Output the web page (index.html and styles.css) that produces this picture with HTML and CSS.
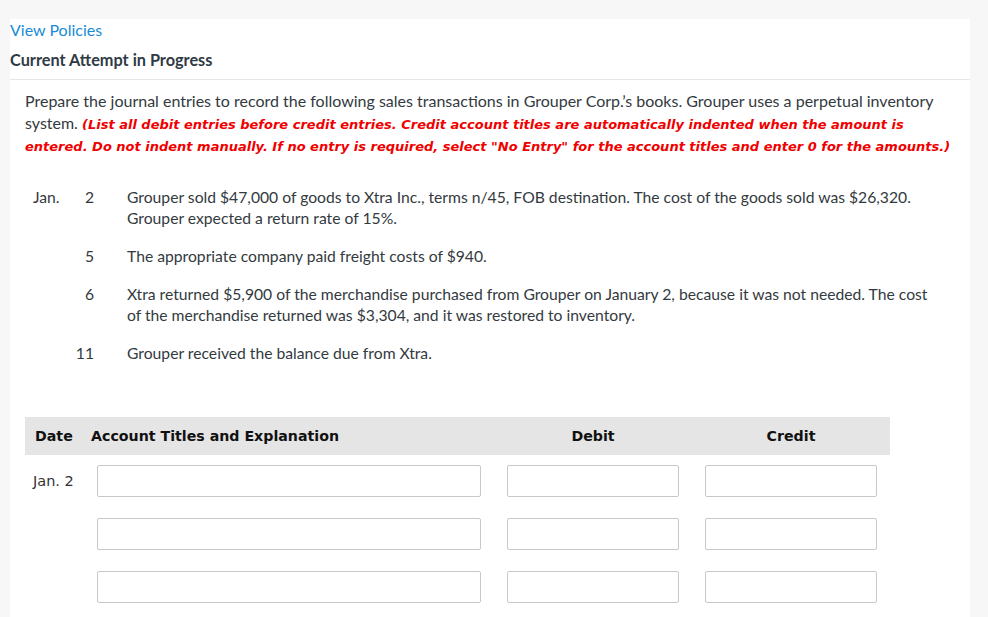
FILE: index.html
```html
<!DOCTYPE html>
<html>
<head>
<meta charset="utf-8">
<link rel="stylesheet" href="styles.css">
</head>
<body>
<div class="panel">
  <div class="top">
    <a class="link" href="#">View Policies</a>
    <div class="attempt">Current Attempt in Progress</div>
  </div>
  <div class="content">
    <p class="intro">Prepare the journal entries to record the following sales transactions in Grouper Corp.’s books. Grouper uses a perpetual inventory system. <em class="note">(List all debit entries before credit entries. Credit account titles are automatically indented when the amount is entered. Do not indent manually. If no entry is required, select "No Entry" for the account titles and enter 0 for the amounts.)</em></p>

    <div class="txns">
      <div class="txn">
        <span class="mon">Jan.</span><span class="day">2</span>
        <span class="desc">Grouper sold $47,000 of goods to Xtra Inc., terms n/45, FOB destination. The cost of the goods sold was $26,320. Grouper expected a return rate of 15%.</span>
      </div>
      <div class="txn">
        <span class="mon"></span><span class="day">5</span>
        <span class="desc">The appropriate company paid freight costs of $940.</span>
      </div>
      <div class="txn">
        <span class="mon"></span><span class="day">6</span>
        <span class="desc">Xtra returned $5,900 of the merchandise purchased from Grouper on January 2, because it was not needed. The cost of the merchandise returned was $3,304, and it was restored to inventory.</span>
      </div>
      <div class="txn">
        <span class="mon"></span><span class="day">11</span>
        <span class="desc">Grouper received the balance due from Xtra.</span>
      </div>
    </div>

    <div class="journal">
      <div class="jhead">
        <div class="h-date">Date</div>
        <div class="h-acct">Account Titles and Explanation</div>
        <div class="h-amt">Debit</div>
        <div class="h-amt">Credit</div>
      </div>
      <div class="jrows">
        <div class="jrow">
          <div class="c-date">Jan. 2</div>
          <div class="c-acct"><input class="in-acct" type="text"></div>
          <div class="c-amt"><input class="in-amt" type="text"></div>
          <div class="c-amt"><input class="in-amt" type="text"></div>
        </div>
        <div class="jrow">
          <div class="c-date"></div>
          <div class="c-acct"><input class="in-acct" type="text"></div>
          <div class="c-amt"><input class="in-amt" type="text"></div>
          <div class="c-amt"><input class="in-amt" type="text"></div>
        </div>
        <div class="jrow">
          <div class="c-date"></div>
          <div class="c-acct"><input class="in-acct" type="text"></div>
          <div class="c-amt"><input class="in-amt" type="text"></div>
          <div class="c-amt"><input class="in-amt" type="text"></div>
        </div>
      </div>
    </div>
  </div>
</div>
</body>
</html>
```
FILE: styles.css
```css
html, body {
  margin: 0;
  padding: 0;
}
body {
  background: #f7f7f7;
  padding: 19px 0 0 10px;
  font-family: Lato, "Liberation Sans", sans-serif;
  color: #333a40;
  height: 617px;
  box-sizing: border-box;
  overflow: hidden;
}
.panel {
  width: 960px;
  background: #fff;
  height: 598px;
}
.top {
  padding-bottom: 8px;
  border-bottom: 1px solid #e6e6e6;
}
.link {
  display: block;
  color: #1a8bd6;
  text-decoration: none;
  font-size: 16px;
  line-height: 22px;
}
.attempt {
  margin-top: 8px;
  font-size: 16.3px;
  font-weight: bold;
  line-height: 22px;
  color: #2f3a44;
}
.content {
  padding: 0 15px;
}
.intro {
  margin: 10px 0 0;
  font-size: 16px;
  line-height: 22px;
  color: #333a40;
}
.note {
  color: #f00000;
  font-family: "DejaVu Sans", Verdana, sans-serif;
  font-weight: bold;
  font-style: italic;
  font-size: 13px;
  line-height: 16px;
}
.txns {
  margin-top: 31px;
  padding-left: 8px;
}
.txn {
  display: grid;
  grid-template-columns: 37px 24px 1fr;
  font-size: 15.7px;
  line-height: 21px;
  margin-bottom: 17px;
}
.day {
  text-align: right;
}
.desc {
  padding-left: 33px;
  padding-right: 16px;
}
.journal {
  margin-top: 53px;
  width: 865px;
}
.jhead {
  display: grid;
  grid-template-columns: 66px 403px 198px 198px;
  height: 38px;
  align-items: center;
  background: #e5e5e5;
  font-family: "DejaVu Sans", Verdana, sans-serif;
  font-weight: bold;
  font-size: 14.2px;
  color: #111;
}
.h-date {
  padding-left: 10px;
}
.h-amt {
  text-align: center;
}
.jrows {
  display: flex;
  flex-direction: column;
  gap: 21px;
  padding-top: 10px;
}
.jrow {
  display: grid;
  grid-template-columns: 66px 403px 198px 198px;
  align-items: center;
}
.c-date {
  padding-left: 8px;
  font-family: "DejaVu Sans", Verdana, sans-serif;
  font-size: 14.5px;
  color: #333;
}
.c-acct {
  padding-left: 6px;
}
.c-amt {
  padding-left: 13px;
}
input {
  box-sizing: border-box;
  height: 32px;
  border: 1px solid #c8c8c8;
  border-radius: 2px;
  background: #fff;
  margin: 0;
  display: block;
}
.in-acct {
  width: 384px;
}
.in-amt {
  width: 172px;
}
```
